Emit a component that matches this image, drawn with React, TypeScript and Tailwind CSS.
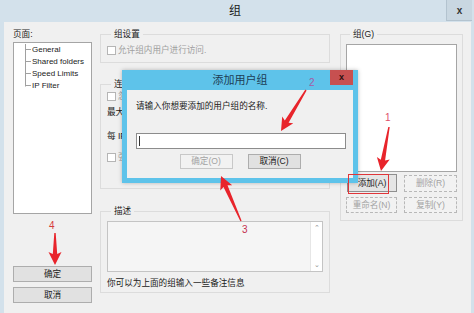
import React from "react";

const F = "font-[Liberation_Sans,Noto_Sans_CJK_SC,sans-serif]";

function arrowPts(x1: number, y1: number, x2: number, y2: number) {
  const dx = x2 - x1;
  const dy = y2 - y1;
  const L = Math.hypot(dx, dy);
  const ux = dx / L;
  const uy = dy / L;
  const px = -uy;
  const py = ux;
  const head = 13;
  const bx = x2 - ux * head;
  const by = y2 - uy * head;
  const nx = bx + ux * 2;
  const ny = by + uy * 2;
  const pts = [
    [x1 + px * 0.7, y1 + py * 0.7],
    [nx + px * 2.2, ny + py * 2.2],
    [bx + px * 6.5, by + py * 6.5],
    [x2, y2],
    [bx - px * 6.5, by - py * 6.5],
    [nx - px * 2.2, ny - py * 2.2],
    [x1 - px * 0.7, y1 - py * 0.7],
  ];
  return pts.map((p) => p.map((v) => v.toFixed(1)).join(",")).join(" ");
}

function Check() {
  return <span className="inline-block w-[9px] h-[9px] border border-[#b5b5b5] bg-white shrink-0" />;
}

function Btn({ children, className = "", disabled = false }: { children: React.ReactNode; className?: string; disabled?: boolean }) {
  return (
    <div
      className={`flex items-center justify-center text-[8.6px] leading-none ${
        disabled ? "bg-[#f2f2f2] border border-[#c8c8c8] text-[#a3a3a3]" : "bg-[#e1e1e1] border border-[#adadad] text-[#1a1a1a]"
      } ${className}`}
    >
      {children}
    </div>
  );
}

function Group({ label, className = "", children }: { label: string; className?: string; children?: React.ReactNode }) {
  return (
    <fieldset className={`border border-[#dcdcdc] ${className}`}>
      <legend className="ml-[4px] px-[3px] text-[8.6px] leading-[12px] text-[#1a1a1a]">{label}</legend>
      {children}
    </fieldset>
  );
}

export default function App() {
  const items = ["General", "Shared folders", "Speed Limits", "IP Filter"];
  return (
    <div className={`relative w-[474px] h-[313px] overflow-hidden bg-[#d3e1eb] flex flex-col ${F}`}>
      {/* title bar */}
      <div className="h-[22px] flex items-center shrink-0">
        <div className="flex-1 text-center text-[12px] text-[#1a1a1a] pl-[24px]">组</div>
        <div className="w-[26px] h-[21px] mr-[2px] self-start bg-[#c9d7e1] border-l border-b border-[#b3c3cf] flex items-center justify-center text-[10px] font-bold text-[#333]">
          x
        </div>
      </div>

      {/* body */}
      <div className="flex-1 ml-[4px] mr-[3px] bg-[#f0f0f0] flex pl-[9px] pt-[6px]">
        {/* left */}
        <div className="w-[79px] flex flex-col">
          <div className="text-[8.6px] leading-[12px] text-[#1a1a1a]">页面:</div>
          <div className="mt-[2px] h-[172px] bg-white border border-[#a5a5a5] flex pt-[1px]">
            <svg width="18" height="48" className="shrink-0">
              <path d="M11.5 0 V42.5 M11.5 5.5 H17 M11.5 17.5 H17 M11.5 29.5 H17 M11.5 41.5 H17" stroke="#a0a0a0" strokeWidth="1" fill="none" />
            </svg>
            <div className="flex flex-col">
              {items.map((t) => (
                <div key={t} className="h-[12px] leading-[12px] text-[8px] text-[#1a1a1a]">
                  {t}
                </div>
              ))}
            </div>
          </div>
          <Btn className="mt-[52px] h-[16px]">确定</Btn>
          <Btn className="mt-[5px] h-[16px]">取消</Btn>
        </div>

        {/* middle */}
        <div className="w-[230px] ml-[8px] flex flex-col">
          <Group label="组设置" className="pl-[6px] pt-[4px] pb-[6px]">
            <div className="flex items-center gap-[2px] h-[12px] text-[8.6px] text-[#a0a0a0]">
              <Check />
              允许组内用户进行访问.
            </div>
          </Group>
          <Group label="连接" className="mt-[15px] h-[111px] pl-[6px] text-[8.6px] text-[#1a1a1a]">
            <div className="flex items-center gap-[2px] h-[12px] text-[#a0a0a0]">
              <Check />
              忽略
            </div>
            <div className="mt-[4px] h-[12px] leading-[12px]">最大</div>
            <div className="mt-[12px] h-[12px] leading-[12px]">每 IP</div>
            <div className="mt-[9px] flex items-center gap-[2px] h-[12px] text-[#a0a0a0]">
              <Check />
              强制
            </div>
          </Group>
          <Group label="描述" className="mt-[16px] px-[6px] pb-[3px]">
            <div className="mt-[4px] h-[51px] bg-[#f5f5f5] border border-[#c4c4c4] flex justify-end">
              <div className="w-[12px] bg-white border-l border-[#e6e6e6] flex flex-col justify-between items-center text-[7px] text-[#909090] py-[1px]">
                <span>⌃</span>
                <span>⌄</span>
              </div>
            </div>
            <div className="mt-[5px] h-[12px] leading-[12px] text-[8.6px] text-[#1a1a1a]">你可以为上面的组输入一些备注信息</div>
          </Group>
        </div>

        {/* right */}
        <div className="w-[123px] ml-[10px] flex flex-col">
          <Group label="组(G)" className="px-[5px] pb-[7px]">
            <div className="mt-[4px] h-[128px] bg-white border border-[#a5a5a5]" />
            <div className="mt-[2px] flex justify-between">
              <Btn className="w-[50px] h-[18px] ml-[1px] !bg-[#e5e5e5] !border-[#8f8f8f]">添加(A)</Btn>
              <Btn disabled className="w-[53px] h-[17px] mt-[1px] border-dashed !border-[#b8b8b8]">删除(R)</Btn>
            </div>
            <div className="mt-[5px] flex justify-between">
              <Btn disabled className="w-[51px] h-[16px] border-dashed !border-[#b8b8b8]">重命名(N)</Btn>
              <Btn disabled className="w-[53px] h-[16px] border-dashed !border-[#b8b8b8]">复制(Y)</Btn>
            </div>
          </Group>
        </div>
      </div>

      {/* dialog */}
      <div className="absolute left-[122px] top-[70px] w-[236px] h-[113px] bg-[#5ec3ea] flex flex-col shadow-[0_0_4px_rgba(0,0,0,0.25)]">
        <div className="h-[20px] flex items-center justify-center relative shrink-0">
          <span className="text-[11px] text-[#1d3d55]">添加用户组</span>
          <div className="absolute right-[5px] top-0 w-[23px] h-[15px] bg-[#c75050] flex items-center justify-center text-[9px] font-bold text-[#2a1010]">
            x
          </div>
        </div>
        <div className="flex-1 mx-[5px] mb-[5px] bg-[#f0f0f0] flex flex-col pl-[9px] pr-[7px] pt-[10px]">
          <div className="h-[12px] leading-[12px] text-[8.6px] text-[#1a1a1a]">请输入你想要添加的用户组的名称.</div>
          <div className="mt-[21px] h-[16px] bg-white border border-[#8c8c8c] flex items-center pl-[2px]">
            <span className="w-px h-[10px] bg-[#333]" />
          </div>
          <div className="mt-[5px] flex justify-center gap-[15px] pr-[2px]">
            <Btn disabled className="w-[53px] h-[15px]">确定(O)</Btn>
            <Btn className="w-[53px] h-[15px]">取消(C)</Btn>
          </div>
        </div>
      </div>

      {/* annotations */}
      <svg className="absolute inset-0 pointer-events-none" width="474" height="313">
        <rect x="348.5" y="174.5" width="40" height="19" fill="none" stroke="#e0363a" strokeWidth="1" />
        <polygon points={arrowPts(389, 127, 381, 171)} fill="#e8242b" />
        <polygon points={arrowPts(306, 90, 281, 131)} fill="#e8242b" />
        <polygon points={arrowPts(241, 221, 221, 176)} fill="#e8242b" />
        <polygon points={arrowPts(55, 233, 55, 265)} fill="#e8242b" />
        <text x="385" y="121" fontSize="10" fill="#e0506a" fontFamily="Liberation Sans, sans-serif">1</text>
        <text x="309" y="86" fontSize="10" fill="#a45ba6" fontFamily="Liberation Sans, sans-serif">2</text>
        <text x="242" y="233" fontSize="10" fill="#c43050" fontFamily="Liberation Sans, sans-serif">3</text>
        <text x="49" y="229" fontSize="10" fill="#d63a3a" fontFamily="Liberation Sans, sans-serif">4</text>
      </svg>
    </div>
  );
}
